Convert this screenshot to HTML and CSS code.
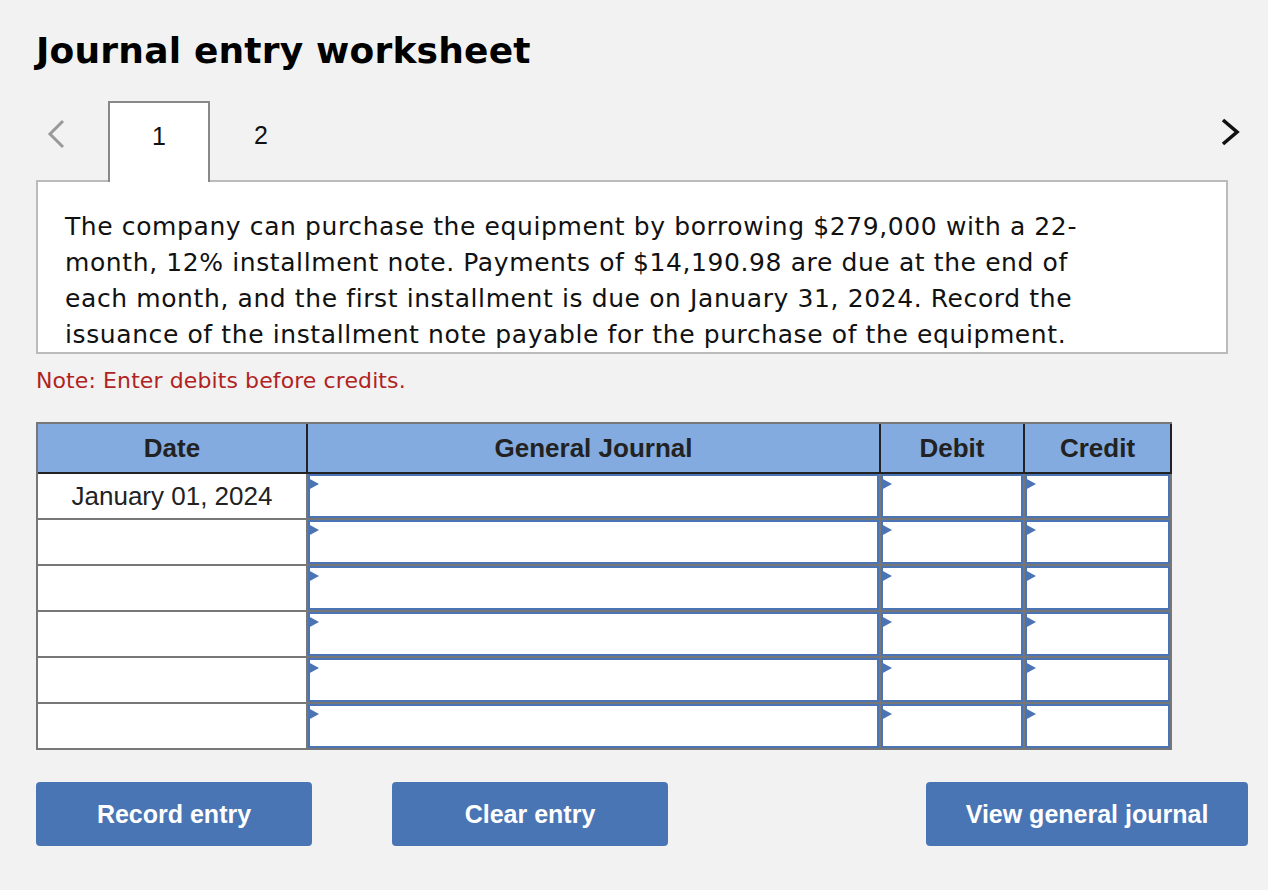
FILE: index.html
```html
<!doctype html>
<html lang="en">
<head>
    <meta charset="UTF-8">
    <title>Journal entry worksheet</title>
    <link rel="stylesheet" href="styles.css">
</head>

<body>
<div class="page">
    <h1 class="title">Journal entry worksheet</h1>

    <div class="tabs">
        <div class="arrow prev">
            <svg width="24" height="30" viewBox="0 0 24 30"><polyline points="19,2 6,15 19,28" fill="none" stroke="#999" stroke-width="3"/></svg>
        </div>
        <div class="tab active">1</div>
        <div class="tab">2</div>
        <div class="arrow next">
            <svg width="22" height="30" viewBox="0 0 22 30"><polyline points="3,3 17,15 3,27" fill="none" stroke="#111" stroke-width="3.6"/></svg>
        </div>
    </div>

    <div class="question">
        <p>The company can purchase the equipment by borrowing $279,000 with a 22-month, 12% installment note. Payments of $14,190.98 are due at the end of each month, and the first installment is due on January 31, 2024. Record the issuance of the installment note payable for the purchase of the equipment.</p>
    </div>

    <div class="note">Note: Enter debits before credits.</div>

    <table class="journal">
        <thead>
        <tr>
            <th class="c-date">Date</th>
            <th class="c-acct">General Journal</th>
            <th class="c-debit">Debit</th>
            <th class="c-credit">Credit</th>
        </tr>
        </thead>
        <tbody id="rows"></tbody>
    </table>

    <div class="actions">
        <button class="btn">Record entry</button>
        <button class="btn clear">Clear entry</button>
        <button class="btn view">View general journal</button>
    </div>
</div>
<script>
    var rows=document.querySelector("#rows");
    var str="";
    for(var i=0;i<6;i++){
        str+=`<tr><td class="date">${i==0?"January 01, 2024":""}</td>`+
            `<td class="field"><input type="text" class="entry"></td>`+
            `<td class="field"><input type="text" class="entry"></td>`+
            `<td class="field"><input type="text" class="entry"></td></tr>`;
    }
    rows.innerHTML=str;
</script>
</body>
</html>
```

FILE: styles.css
```css
*{
    margin: 0;
    padding: 0;
    box-sizing: content-box;
}
html,body{
    background: #f2f2f2;
}
body{
    font-family: "DejaVu Sans", Verdana, sans-serif;
    color: #111;
}
.page{
    padding: 0 20px 40px 36px;
}
.title{
    margin-top: 31px;
    font-size: 36px;
    line-height: 40px;
    font-weight: bold;
    letter-spacing: 0.2px;
    color: #000;
}

/* tab strip */
.tabs{
    display: flex;
    align-items: flex-end;
    margin-top: 30px;
    margin-bottom: -2px;
}
.arrow{
    height: 80px;
    display: flex;
    align-items: flex-start;
}
.arrow.prev{
    width: 72px;
}
.arrow.prev svg{
    margin: 17px 0 0 8px;
}
.arrow.next{
    margin-left: auto;
    margin-right: 6px;
}
.arrow.next svg{
    margin-top: 15px;
}
.tab{
    width: 102px;
    height: 62px;
    padding-top: 18px;
    font-family: "Liberation Sans", Arial, sans-serif;
    font-size: 25px;
    line-height: 30px;
    text-align: center;
    color: #111;
}
.tab.active{
    width: 98px;
    height: 61px;
    border: 2px solid #888;
    border-bottom: none;
    background: #fff;
    position: relative;
}

/* question text */
.question{
    width: 1161px;
    height: 143px;
    padding: 27px 0 0 27px;
    background: #fff;
    border: 2px solid #bbb;
    overflow: hidden;
}
.question p{
    max-width: 1040px;
    font-size: 25px;
    line-height: 36px;
    letter-spacing: 0.6px;
}
.note{
    margin-top: 15px;
    font-size: 22px;
    line-height: 24px;
    letter-spacing: 0.1px;
    color: #b0231f;
}

/* journal grid */
table.journal{
    margin-top: 29px;
    border-spacing: 0;
    border-top: 2px solid #777;
    border-left: 2px solid #777;
    font-family: "Liberation Sans", Arial, sans-serif;
    font-size: 26px;
    color: #222;
}
.journal th{
    height: 48px;
    background: #83abdf;
    border-right: 2px solid #222;
    border-bottom: 2px solid #222;
    font-weight: bold;
}
.c-date{ width: 268px; }
.c-acct{ width: 571px; }
.c-debit{ width: 142px; }
.c-credit{ width: 145px; }
.journal td{
    height: 44px;
    padding: 0;
    background: #fff;
    border-right: 2px solid #777;
    border-bottom: 2px solid #777;
}
.journal td.date{
    text-align: center;
    vertical-align: middle;
}
td.field{
    position: relative;
}
td.field::before{
    content: "";
    position: absolute;
    left: 0;
    top: 4px;
    border-left: 11px solid #4a74b4;
    border-top: 6px solid transparent;
    border-bottom: 6px solid transparent;
}
.entry{
    display: block;
    width: 100%;
    height: 44px;
    box-sizing: border-box;
    border: 2px solid #4a74b4;
    outline: none;
    background: #fff;
    font-size: 22px;
}

/* buttons */
.actions{
    display: flex;
    margin-top: 32px;
}
.btn{
    width: 276px;
    height: 64px;
    border: none;
    border-radius: 4px;
    background: #4a75b5;
    color: #fff;
    font-family: "Liberation Sans", Arial, sans-serif;
    font-size: 25px;
    font-weight: bold;
}
.btn.clear{
    margin-left: 80px;
}
.btn.view{
    width: 322px;
    margin-left: auto;
}
```
